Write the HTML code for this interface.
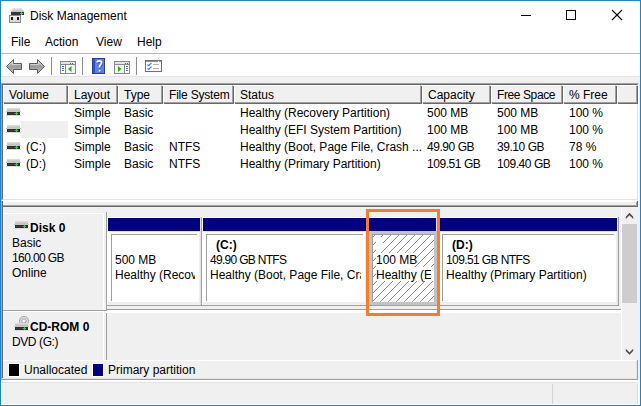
<!DOCTYPE html>
<html><head><meta charset="utf-8">
<style>
*{margin:0;padding:0;box-sizing:border-box}
html,body{width:641px;height:406px;overflow:hidden;background:#fff}
body{position:relative;font-family:"Liberation Sans",sans-serif;font-size:12px;color:#000}
.a{position:absolute}
.t{position:absolute;line-height:14px;white-space:nowrap}
.b{font-weight:bold}
.clip{overflow:hidden}
.hc{top:85px;height:18px;background:#f0f0f0;border-left:1px solid #fff;border-top:1px solid #fff;border-right:1px solid #a0a0a0;border-bottom:1px solid #a0a0a0;box-shadow:1px 1px 0 #696969}
</style></head><body>
<!-- window border -->
<div class="a" style="left:0;top:0;width:641px;height:406px;border:1px solid #1883d7"></div>

<!-- title bar -->
<svg class="a" style="left:9px;top:8px" width="17" height="16" viewBox="0 0 17 16">
  <defs><linearGradient id="gt" x1="0" y1="0" x2="0" y2="1"><stop offset="0" stop-color="#e8e8e8"/><stop offset="1" stop-color="#bcbcbc"/></linearGradient>
  <linearGradient id="gb" x1="0" y1="0" x2="0" y2="1"><stop offset="0" stop-color="#f6f6f6"/><stop offset="1" stop-color="#cfcfcf"/></linearGradient></defs>
  <path d="M3.5 0h9l2.5 3.2V4H2V3.2z" fill="url(#gt)"/>
  <rect x="2" y="4" width="13" height="3" fill="#363636"/>
  <rect x="12" y="4" width="1" height="3" fill="#2ee02e"/><rect x="11" y="5" width="3" height="1" fill="#2ee02e"/>
  <rect x="0.5" y="7.5" width="11" height="7" fill="url(#gb)" stroke="#8a8a8a" stroke-width="1"/>
  <rect x="2" y="9" width="2" height="3" fill="#1a1a1a"/>
  <rect x="8" y="9" width="2" height="3" fill="#1a1a1a"/>
</svg>
<div class="t" style="left:30px;top:9px">Disk Management</div>
<div class="a" style="left:521px;top:15px;width:10px;height:1px;background:#000"></div>
<div class="a" style="left:566px;top:10px;width:10px;height:10px;border:1px solid #000"></div>
<svg class="a" style="left:611px;top:9px" width="12" height="12" viewBox="0 0 12 12"><path d="M1 1L11 11M11 1L1 11" stroke="#000" stroke-width="1.1"/></svg>

<!-- menu -->
<div class="t" style="left:11px;top:35px">File</div>
<div class="t" style="left:45px;top:35px">Action</div>
<div class="t" style="left:96px;top:35px">View</div>
<div class="t" style="left:137px;top:35px">Help</div>
<div class="a" style="left:1px;top:53px;width:639px;height:1px;background:#b9b9b9"></div>

<!-- toolbar -->
<svg width="0" height="0" style="position:absolute"><defs>
<linearGradient id="ag" x1="0" y1="0" x2="0" y2="1"><stop offset="0" stop-color="#d4d4d4"/><stop offset="0.5" stop-color="#9a9a9a"/><stop offset="1" stop-color="#c4c4c4"/></linearGradient>
<linearGradient id="hg" x1="0" y1="0" x2="1" y2="0"><stop offset="0" stop-color="#22379a"/><stop offset="0.6" stop-color="#4a6ad6"/><stop offset="1" stop-color="#6d8ce6"/></linearGradient>
</defs></svg>
<svg class="a" style="left:5px;top:58px" width="18" height="17" viewBox="0 0 18 17">
  <path d="M1.5 8.5L8.5 1.5V5.5h8v6h-8v4z" fill="url(#ag)" stroke="#5e5e5e" stroke-width="1" stroke-linejoin="round"/>
  <path d="M3 8.5L7.5 4V6.5h8" fill="none" stroke="#e6e6e6" stroke-width="0.8" opacity="0.8"/>
</svg>
<svg class="a" style="left:28px;top:58px" width="18" height="17" viewBox="0 0 18 17">
  <path d="M16.5 8.5L9.5 1.5V5.5h-8v6h8v4z" fill="url(#ag)" stroke="#5e5e5e" stroke-width="1" stroke-linejoin="round"/>
  <path d="M2.5 6.5h8V4l4.5 4.5" fill="none" stroke="#e6e6e6" stroke-width="0.8" opacity="0.8"/>
</svg>
<div class="a" style="left:51px;top:57px;width:1px;height:18px;background:#8c8c8c"></div>
<svg class="a" style="left:60px;top:61px" width="16" height="13" viewBox="0 0 16 13">
  <rect x="0.5" y="0.5" width="15" height="12" fill="#fff" stroke="#8a8a8a"/>
  <rect x="1" y="1" width="14" height="2" fill="#e4e4e4"/>
  <rect x="1" y="3" width="14" height="1" fill="#8a8a8a"/>
  <rect x="10" y="2" width="1" height="1" fill="#606060"/><rect x="12" y="2" width="1" height="1" fill="#606060"/>
  <rect x="2" y="5" width="2" height="1" fill="#2f7fd6"/><rect x="2" y="7" width="2" height="1" fill="#2f7fd6"/><rect x="2" y="9" width="2" height="1" fill="#2f7fd6"/>
  <rect x="5" y="4" width="1" height="8" fill="#8a8a8a"/>
  <rect x="6" y="4" width="9" height="8" fill="#f2f2f2"/>
  <path d="M8 8L11.5 5v6z" fill="#2ea82e"/>
</svg>
<div class="a" style="left:82px;top:57px;width:1px;height:18px;background:#8c8c8c"></div>
<svg class="a" style="left:92px;top:58px" width="13" height="16" viewBox="0 0 13 16">
  <rect x="0" y="0" width="13" height="16" fill="#2640a6"/>
  <rect x="1" y="1" width="11" height="14" fill="#5c80e0"/>
  <rect x="1" y="1" width="2" height="14" fill="#2f52c4"/>
  <path d="M5.8 5.2C5.8 2.8 10.4 2.8 10.4 5.2C10.4 7 8.3 7.2 8.3 9.2V10.2" stroke="#23369a" stroke-width="1.7" fill="none" opacity="0.75"/>
  <rect x="7.5" y="12.5" width="1.7" height="1.8" fill="#23369a" opacity="0.75"/>
  <path d="M5.1 4.6C5.1 2.2 9.7 2.2 9.7 4.6C9.7 6.4 7.6 6.6 7.6 8.6V9.6" stroke="#fff" stroke-width="1.7" fill="none"/>
  <rect x="6.8" y="11.8" width="1.7" height="1.8" fill="#fff"/>
</svg>
<svg class="a" style="left:114px;top:61px" width="16" height="13" viewBox="0 0 16 13">
  <rect x="0.5" y="0.5" width="15" height="12" fill="#fff" stroke="#8a8a8a"/>
  <rect x="1" y="1" width="14" height="2" fill="#e4e4e4"/>
  <rect x="1" y="3" width="14" height="1" fill="#8a8a8a"/>
  <rect x="11" y="2" width="1" height="1" fill="#606060"/><rect x="13" y="2" width="1" height="1" fill="#606060"/>
  <rect x="1" y="4" width="9" height="8" fill="#f2f2f2"/>
  <path d="M4 5v6l3.5-3z" fill="#2ea82e"/>
  <rect x="10" y="4" width="1" height="8" fill="#8a8a8a"/>
  <rect x="12" y="5" width="2" height="1" fill="#2f7fd6"/><rect x="12" y="7" width="2" height="1" fill="#2f7fd6"/><rect x="12" y="9" width="2" height="1" fill="#2f7fd6"/>
</svg>
<div class="a" style="left:136px;top:57px;width:1px;height:18px;background:#8c8c8c"></div>
<svg class="a" style="left:145px;top:60px" width="17" height="12" viewBox="0 0 17 12">
  <rect x="0.5" y="0.5" width="16" height="11" fill="#fff" stroke="#707070"/>
  <rect x="1" y="1" width="15" height="1" fill="#909090"/>
  <rect x="13" y="1" width="1" height="1" fill="#fff"/>
  <path d="M2.5 4.5l1.2 1.2L6.5 2.8M2.5 8.3l1.2 1.2L6.5 6.6" stroke="#2f86d8" stroke-width="1.2" fill="none"/>
  <rect x="8" y="4" width="6" height="1" fill="#b4b4b4"/><rect x="8" y="8" width="6" height="1" fill="#b4b4b4"/>
</svg>

<!-- gray bg area -->
<div class="a" style="left:1px;top:76px;width:639px;height:329px;background:#f0f0f0"></div>

<!-- list view -->
<div class="a" style="left:1px;top:76px;width:639px;height:1px;background:#e5e5e5"></div>
<div class="a" style="left:1px;top:83px;width:638px;height:118px;background:#fff;border-left:1px solid #a0a0a0;border-top:1px solid #a0a0a0;border-right:1px solid #fff;border-bottom:1px solid #fff"></div>
<div class="a" style="left:2px;top:84px;width:636px;height:116px;border-left:1px solid #696969;border-top:1px solid #696969;border-right:1px solid #e3e3e3;border-bottom:1px solid #e3e3e3"></div>
<!-- header cells -->
<div class="a hc" style="left:3px;width:64px"></div>
<div class="t" style="left:9px;top:88px">Volume</div>
<div class="a hc" style="left:68px;width:49px"></div>
<div class="t" style="left:74px;top:88px">Layout</div>
<div class="a hc" style="left:118px;width:44px"></div>
<div class="t" style="left:124px;top:88px">Type</div>
<div class="a hc" style="left:163px;width:70px"></div>
<div class="t" style="left:169px;top:88px;letter-spacing:-0.2px">File System</div>
<div class="a hc" style="left:234px;width:187px"></div>
<div class="t" style="left:240px;top:88px">Status</div>
<div class="a hc" style="left:422px;width:68px"></div>
<div class="t" style="left:428px;top:88px">Capacity</div>
<div class="a hc" style="left:491px;width:71px"></div>
<div class="t" style="left:497px;top:88px;letter-spacing:-0.4px">Free Space</div>
<div class="a hc" style="left:563px;width:53px"></div>
<div class="t" style="left:569px;top:88px">% Free</div>
<div class="a hc" style="left:617px;width:20px"></div>
<div class="a" style="left:21px;top:121px;width:47px;height:17px;background:#f0f0f0"></div>
<svg class="a vi" style="left:6px;top:108px" width="15" height="8" viewBox="0 0 15 8"><use href="#vol"/></svg>
<div class="t" style="left:74px;top:106px">Simple</div>
<div class="t" style="left:124px;top:106px">Basic</div>
<div class="t" style="left:240px;top:106px">Healthy (Recovery Partition)</div>
<div class="t" style="left:427px;top:106px">500 MB</div>
<div class="t" style="left:497px;top:106px">500 MB</div>
<div class="t" style="left:569px;top:106px">100 %</div>
<svg class="a vi" style="left:6px;top:125px" width="15" height="8" viewBox="0 0 15 8"><use href="#vol"/></svg>
<div class="t" style="left:74px;top:123px">Simple</div>
<div class="t" style="left:124px;top:123px">Basic</div>
<div class="t" style="left:240px;top:123px">Healthy (EFI System Partition)</div>
<div class="t" style="left:427px;top:123px">100 MB</div>
<div class="t" style="left:497px;top:123px">100 MB</div>
<div class="t" style="left:569px;top:123px">100 %</div>
<svg class="a vi" style="left:6px;top:142px" width="15" height="8" viewBox="0 0 15 8"><use href="#vol"/></svg>
<div class="t" style="left:26px;top:140px">(C:)</div>
<div class="t" style="left:74px;top:140px">Simple</div>
<div class="t" style="left:124px;top:140px">Basic</div>
<div class="t" style="left:169px;top:140px">NTFS</div>
<div class="t" style="left:240px;top:140px">Healthy (Boot, Page File, Crash ...</div>
<div class="t" style="left:427px;top:140px;letter-spacing:-0.45px">49.90 GB</div>
<div class="t" style="left:497px;top:140px;letter-spacing:-0.45px">39.10 GB</div>
<div class="t" style="left:569px;top:140px">78 %</div>
<svg class="a vi" style="left:6px;top:159px" width="15" height="8" viewBox="0 0 15 8"><use href="#vol"/></svg>
<div class="t" style="left:26px;top:157px">(D:)</div>
<div class="t" style="left:74px;top:157px">Simple</div>
<div class="t" style="left:124px;top:157px">Basic</div>
<div class="t" style="left:169px;top:157px">NTFS</div>
<div class="t" style="left:240px;top:157px">Healthy (Primary Partition)</div>
<div class="t" style="left:427px;top:157px;letter-spacing:-0.45px">109.51 GB</div>
<div class="t" style="left:497px;top:157px;letter-spacing:-0.45px">109.40 GB</div>
<div class="t" style="left:569px;top:157px">100 %</div>
<svg width="0" height="0" style="position:absolute">
 <defs>
  <linearGradient id="vg" x1="0" y1="0" x2="0" y2="1"><stop offset="0" stop-color="#e2e2e2"/><stop offset="1" stop-color="#bdbdbd"/></linearGradient>
  <g id="vol">
   <rect x="1" y="0" width="13" height="3" fill="url(#vg)"/>
   <rect x="0" y="3" width="15" height="1" fill="#c8c8c8"/>
   <rect x="1" y="4" width="13" height="3" fill="#2e2e2e"/>
   <rect x="2" y="5" width="7" height="1" fill="#3e3e3e"/>
   <rect x="10" y="4" width="1" height="3" fill="#30d030"/><rect x="9" y="5" width="3" height="1" fill="#30d030"/>
   <rect x="0" y="7" width="15" height="1" fill="#dcdcdc"/>
  </g>
 </defs>
</svg>

<!-- splitter -->
<div class="a" style="left:3px;top:201px;width:634px;height:1px;background:#fff"></div>
<div class="a" style="left:3px;top:205px;width:634px;height:1px;background:#a0a0a0"></div>
<div class="a" style="left:3px;top:206px;width:635px;height:1px;background:#696969"></div>
<div class="a" style="left:636px;top:202px;width:1px;height:4px;background:#a0a0a0"></div>
<div class="a" style="left:637px;top:201px;width:1px;height:6px;background:#696969"></div>
<div class="a" style="left:1px;top:201px;width:1px;height:178px;background:#a0a0a0"></div>
<div class="a" style="left:2px;top:201px;width:1px;height:177px;background:#696969"></div>
<!-- disk pane -->
<div class="a" style="left:3px;top:213px;width:100px;height:97px;border-top:1px solid #fff"></div>
<div class="a" style="left:103px;top:213px;width:1px;height:147px;background:#fff"></div>
<div class="a" style="left:106px;top:212px;width:1px;height:148px;background:#a0a0a0"></div>
<div class="a" style="left:3px;top:310px;width:104px;height:1px;background:#a0a0a0"></div>
<div class="a" style="left:3px;top:311px;width:101px;height:1px;background:#fff"></div>
<div class="a" style="left:106px;top:311px;width:1px;height:2px;background:#fff"></div>
<div class="a" style="left:107px;top:305px;width:512px;height:1px;background:#a0a0a0"></div>
<div class="a" style="left:107px;top:309px;width:514px;height:1px;background:#a0a0a0"></div>
<div class="a" style="left:107px;top:310px;width:514px;height:3px;background:#fff"></div>

<svg class="a" style="left:14px;top:221px" width="15" height="8" viewBox="0 0 15 8"><use href="#vol"/></svg>
<div class="t b" style="left:30px;top:221px">Disk 0</div>
<div class="t" style="left:12px;top:236px">Basic</div>
<div class="t" style="left:12px;top:251px;letter-spacing:-0.6px">160.00 GB</div>
<div class="t" style="left:12px;top:266px">Online</div>

<svg class="a" style="left:14px;top:315px" width="16" height="16" viewBox="0 0 16 16">
  <circle cx="10" cy="6" r="4.6" fill="#dedede" stroke="#a8a8a8" stroke-width="1"/>
  <circle cx="10" cy="6" r="2.2" fill="#fff" stroke="#9a9a9a" stroke-width="1"/>
  <g transform="translate(0,8)"><use href="#vol"/></g>
</svg>
<div class="t b" style="left:30px;top:320px">CD-ROM 0</div>
<div class="t" style="left:12px;top:335px;letter-spacing:-0.4px">DVD (G:)</div>
<!-- partitions -->
<div class="a" style="left:107px;top:217px;width:511px;height:1px;background:#fff"></div>
<div class="a" style="left:107px;top:217px;width:1px;height:88px;background:#fff"></div>
<div class="a" style="left:108px;top:218px;width:92px;height:13px;background:#000080"></div>
<div class="a" style="left:200px;top:217px;width:1px;height:88px;background:#e3e3e3"></div>
<div class="a" style="left:201px;top:217px;width:1px;height:89px;background:#a0a0a0"></div>
<div class="a" style="left:108px;top:231px;width:92px;height:1px;background:#e3e3e3"></div>
<div class="a" style="left:107px;top:232px;width:92px;height:70px;background:#fff"></div>
<div class="a" style="left:111px;top:234px;width:86px;height:67px;border-left:1px solid #a0a0a0;border-top:1px solid #a0a0a0"></div>
<div class="t clip" style="left:115px;top:253px;width:80px">500 MB</div>
<div class="t clip" style="left:115px;top:268px;width:80px">Healthy (Recov</div>
<div class="a" style="left:202px;top:217px;width:1px;height:88px;background:#fff"></div>
<div class="a" style="left:203px;top:218px;width:163px;height:13px;background:#000080"></div>
<div class="a" style="left:366px;top:217px;width:1px;height:88px;background:#e3e3e3"></div>
<div class="a" style="left:367px;top:217px;width:1px;height:89px;background:#a0a0a0"></div>
<div class="a" style="left:203px;top:231px;width:163px;height:1px;background:#e3e3e3"></div>
<div class="a" style="left:202px;top:232px;width:163px;height:70px;background:#fff"></div>
<div class="a" style="left:206px;top:234px;width:157px;height:67px;border-left:1px solid #a0a0a0;border-top:1px solid #a0a0a0"></div>
<div class="t b" style="left:216px;top:238px">(C:)</div>
<div class="t clip" style="left:210px;top:253px;width:151px;letter-spacing:-0.7px">49.90 GB NTFS</div>
<div class="t clip" style="left:210px;top:268px;width:151px">Healthy (Boot, Page File, Cra</div>
<div class="a" style="left:368px;top:217px;width:1px;height:88px;background:#fff"></div>
<div class="a" style="left:369px;top:218px;width:67px;height:13px;background:#000080"></div>
<div class="a" style="left:436px;top:217px;width:1px;height:88px;background:#e3e3e3"></div>
<div class="a" style="left:437px;top:217px;width:1px;height:89px;background:#a0a0a0"></div>
<div class="a" style="left:369px;top:231px;width:67px;height:1px;background:#e3e3e3"></div>
<div class="a" style="left:369px;top:231px;width:68px;height:74px;background:#c3c3c3"></div>
<svg class="a" style="left:373px;top:235px" width="61" height="67"><defs><pattern id="hp" patternUnits="userSpaceOnUse" width="8" height="8" x="-373" y="-235"><rect x="0" y="1" width="1" height="1" fill="#8c8c8c"/><rect x="1" y="0" width="1" height="1" fill="#8c8c8c"/><rect x="2" y="7" width="1" height="1" fill="#8c8c8c"/><rect x="3" y="6" width="1" height="1" fill="#8c8c8c"/><rect x="4" y="5" width="1" height="1" fill="#8c8c8c"/><rect x="5" y="4" width="1" height="1" fill="#8c8c8c"/><rect x="6" y="3" width="1" height="1" fill="#8c8c8c"/><rect x="7" y="2" width="1" height="1" fill="#8c8c8c"/></pattern></defs><rect width="100%" height="100%" fill="#fff"/><rect width="100%" height="100%" fill="url(#hp)"/></svg>
<div class="a" style="left:372px;top:234px;width:62px;height:68px;border-left:1px solid #a0a0a0;border-top:1px solid #a0a0a0"></div>
<div class="a" style="left:376px;top:237px;width:7px;height:13px;background:#fff"></div>
<div class="a" style="left:376px;top:253px;width:39px;height:14px;background:#fff"></div>
<div class="a" style="left:376px;top:267px;width:58px;height:14px;background:#fff"></div>
<div class="t clip" style="left:376px;top:253px;width:55px">100 MB</div>
<div class="t clip" style="left:376px;top:268px;width:55px">Healthy (E</div>
<div class="a" style="left:438px;top:217px;width:1px;height:88px;background:#fff"></div>
<div class="a" style="left:439px;top:218px;width:178px;height:13px;background:#000080"></div>
<div class="a" style="left:617px;top:217px;width:1px;height:88px;background:#e3e3e3"></div>
<div class="a" style="left:618px;top:217px;width:1px;height:89px;background:#a0a0a0"></div>
<div class="a" style="left:439px;top:231px;width:178px;height:1px;background:#e3e3e3"></div>
<div class="a" style="left:438px;top:232px;width:178px;height:70px;background:#fff"></div>
<div class="a" style="left:442px;top:234px;width:172px;height:67px;border-left:1px solid #a0a0a0;border-top:1px solid #a0a0a0"></div>
<div class="t b" style="left:452px;top:238px">(D:)</div>
<div class="t clip" style="left:446px;top:253px;width:166px;letter-spacing:-0.6px">109.51 GB NTFS</div>
<div class="t clip" style="left:446px;top:268px;width:166px">Healthy (Primary Partition)</div>
<div class="a" style="left:366px;top:209px;width:74px;height:107px;border:3px solid #fb7c24"></div>
<div class="a" style="left:621px;top:207px;width:1px;height:153px;background:#fff"></div>
<div class="a" style="left:622px;top:224px;width:15px;height:79px;background:#cdcdcd"></div>
<svg class="a" style="left:624px;top:211px" width="11" height="10" viewBox="0 0 11 10"><polygon points="5.5,1.8 9.2,5.8 9.2,8 5.5,4.3 1.8,8 1.8,5.8" fill="#4a4a4a"/></svg>
<svg class="a" style="left:624px;top:346px" width="11" height="10" viewBox="0 0 11 10"><polygon points="1.8,2.8 5.5,6.5 9.2,2.8 9.2,5 5.5,8.8 1.8,5" fill="#4a4a4a"/></svg>
<div class="a" style="left:3px;top:360px;width:634px;height:1px;background:#fff"></div>
<div class="a" style="left:636px;top:361px;width:1px;height:18px;background:#e3e3e3"></div>
<div class="a" style="left:3px;top:378px;width:634px;height:1px;background:#e3e3e3"></div>
<div class="a" style="left:637px;top:360px;width:1px;height:20px;background:#a0a0a0"></div>
<div class="a" style="left:1px;top:379px;width:637px;height:1px;background:#a0a0a0"></div>
<div class="a" style="left:8px;top:363px;width:12px;height:14px;background:#000;border:1px solid #fff"></div>
<div class="t" style="left:24px;top:363px">Unallocated</div>
<div class="a" style="left:92px;top:363px;width:12px;height:14px;background:#000080;border:1px solid #fff"></div>
<div class="t" style="left:108px;top:363px">Primary partition</div>
<div class="a" style="left:1px;top:380px;width:639px;height:2px;background:#fff"></div>
<div class="a" style="left:1px;top:382px;width:638px;height:1px;background:#e3e3e3"></div>
<div class="a" style="left:552px;top:384px;width:1px;height:20px;background:#d4d4d4"></div>
<div class="a" style="left:637px;top:384px;width:1px;height:20px;background:#dcdcdc"></div>
<div class="a" style="left:638px;top:382px;width:2px;height:23px;background:#fff"></div>
<div class="a" style="left:1px;top:404px;width:639px;height:1px;background:#fff"></div>
</body></html>
